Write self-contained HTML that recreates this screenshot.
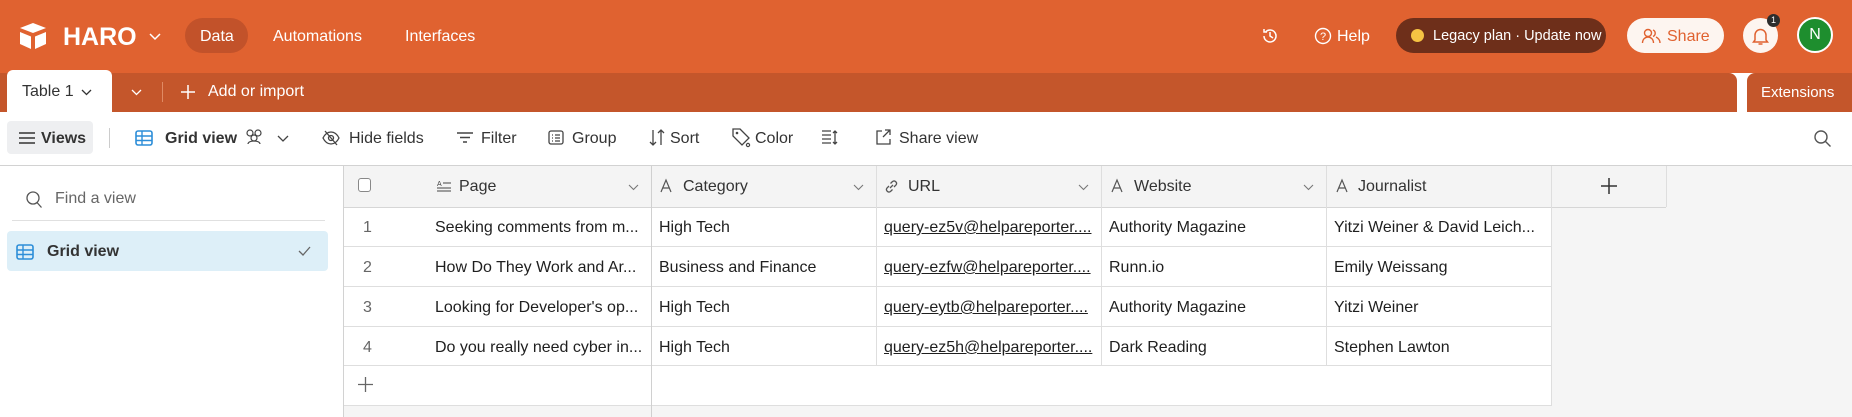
<!DOCTYPE html>
<html><head><meta charset="utf-8"><style>
*{box-sizing:border-box;margin:0;padding:0}
body{width:1852px;height:417px;overflow:hidden;background:#fff;font-family:"Liberation Sans",sans-serif;font-size:15px;color:#1f1f1f;position:relative}
.a{position:absolute;white-space:nowrap}
.w{color:#fff}
svg{position:absolute;overflow:visible}
.cell{position:absolute;height:40px;line-height:40px;font-size:16px;color:#1f1f1f;white-space:nowrap;overflow:hidden;width:215px}
.u{text-decoration:underline}
.hl{position:absolute;height:1px;background:#dedede}
.vl{position:absolute;width:1px;background:#dedede}
.tb{position:absolute;top:130px;font-size:16px;color:#333}
</style></head><body>
<!-- top bar -->
<div class="a" style="left:0;top:0;width:1852px;height:73px;background:#e06230"></div>
<svg style="left:18px;top:22px" width="30" height="28" viewBox="0 0 30 28"><path d="M15 1 L28 6 L15 11 L2 6Z" fill="#fff"/><path d="M2 10 L13 14.5 L13 27 L2 22Z" fill="#fff"/><path d="M17 14.5 L28 10 L28 22 L17 27Z" fill="#fff"/></svg>
<div class="a w" style="left:63px;top:23px;font-size:25px;font-weight:bold">HARO</div>
<svg style="left:149px;top:33px" width="12" height="8"><path d="M1 1l5 5 5-5" stroke="#fff" stroke-width="1.5" fill="none"/></svg>
<div class="a" style="left:185px;top:18px;width:63px;height:35px;border-radius:18px;background:#c2522a"></div>
<div class="a w" style="left:200px;top:28px;font-size:16px">Data</div>
<div class="a w" style="left:273px;top:28px;font-size:16px">Automations</div>
<div class="a w" style="left:405px;top:28px;font-size:16px">Interfaces</div>
<svg style="left:1261px;top:27px" width="18" height="18" viewBox="0 0 18 18"><path d="M3 9a6 6 0 1 0 2-4.5M3 2v3h3M9 5v4l3 2" stroke="#fff" stroke-width="1.5" fill="none"/></svg>
<svg style="left:1314px;top:27px" width="18" height="18"><circle cx="9" cy="9" r="7.5" stroke="#fff" stroke-width="1.4" fill="none"/><text x="9" y="13" font-size="11" fill="#fff" text-anchor="middle" font-family="Liberation Sans">?</text></svg>
<div class="a w" style="left:1337px;top:28px;font-size:16px">Help</div>
<div class="a" style="left:1396px;top:18px;width:210px;height:35px;border-radius:18px;background:#6e2f1a"></div>
<div class="a" style="left:1411px;top:29px;width:13px;height:13px;border-radius:50%;background:#f6c343"></div>
<div class="a w" style="left:1433px;top:28px;font-size:14.5px">Legacy plan · Update now</div>
<div class="a" style="left:1627px;top:18px;width:97px;height:35px;border-radius:18px;background:#fdf5f0"></div>
<svg style="left:1642px;top:28px" width="20" height="16"><circle cx="6" cy="5" r="3.5" stroke="#e06230" stroke-width="1.4" fill="none"/><path d="M0.5 15c0-4 3-6 5.5-6s5.5 2 5.5 6M11 2a3.5 3.5 0 0 1 0 6.5M14 9c2 1 4 3 4 6" stroke="#e06230" stroke-width="1.4" fill="none"/></svg>
<div class="a" style="left:1667px;top:28px;font-size:16px;color:#e06230">Share</div>
<div class="a" style="left:1743px;top:18px;width:35px;height:35px;border-radius:50%;background:#fdf5f0"></div>
<svg style="left:1752px;top:27px" width="17" height="19" viewBox="0 0 17 19"><path d="M3 13V8a5.5 5.5 0 0 1 11 0v5l1.5 2h-14zM6.5 17h4" stroke="#e06230" stroke-width="1.5" fill="none"/></svg>
<div class="a" style="left:1767px;top:14px;width:13px;height:13px;border-radius:50%;background:#2d2d2d;color:#fff;font-size:9px;line-height:13px;text-align:center">1</div>
<div class="a" style="left:1797px;top:17px;width:36px;height:36px;border-radius:50%;background:#1e8e2e;border:2px solid #fff;color:#fff;font-size:16px;line-height:32px;text-align:center">N</div>
<!-- tab bar -->
<div class="a" style="left:0;top:73px;width:1737px;height:39px;background:#c4562b;border-radius:0 8px 0 0"></div>
<div class="a" style="left:1747px;top:73px;width:105px;height:39px;background:#c4562b;border-radius:8px 0 0 0"></div>
<div class="a w" style="left:1761px;top:84px;font-size:15px">Extensions</div>
<div class="a" style="left:7px;top:70px;width:105px;height:45px;background:#fff;border-radius:6px 6px 0 0"></div>
<div class="a" style="left:22px;top:83px;font-size:16px;color:#333">Table 1</div>
<svg style="left:81px;top:89px" width="11" height="7"><path d="M1 1l4.5 4.5L10 1" stroke="#333" stroke-width="1.3" fill="none"/></svg>
<svg style="left:131px;top:89px" width="11" height="7"><path d="M1 1l4.5 4.5L10 1" stroke="#fff" stroke-width="1.3" fill="none"/></svg>
<div class="a" style="left:162px;top:82px;width:1px;height:20px;background:#e08a64"></div>
<svg style="left:180px;top:84px" width="16" height="16"><path d="M8 1v14M1 8h14" stroke="#fff" stroke-width="1.5"/></svg>
<div class="a w" style="left:208px;top:83px;font-size:16px">Add or import</div>
<!-- toolbar -->
<div class="a" style="left:7px;top:121px;width:86px;height:33px;border-radius:4px;background:#eeeff1"></div>
<svg style="left:19px;top:132px" width="16" height="12"><path d="M0 1h16M0 6h16M0 11h16" stroke="#333" stroke-width="1.5"/></svg>
<div class="a" style="left:41px;top:130px;font-size:16px;font-weight:bold;color:#333">Views</div>
<div class="a" style="left:109px;top:128px;width:1px;height:20px;background:#ccc"></div>
<svg style="left:135px;top:130px" width="18" height="16"><rect x="1" y="1" width="16" height="14" rx="2" stroke="#2d8ed8" stroke-width="1.6" fill="none"/><path d="M1 6h16M1 10.5h16M7 1v14" stroke="#2d8ed8" stroke-width="1.4"/></svg>
<div class="a" style="left:165px;top:130px;font-size:16px;font-weight:bold;color:#333">Grid view</div>
<svg style="left:244px;top:129px" width="20" height="16"><circle cx="6" cy="4" r="3" stroke="#444" stroke-width="1.2" fill="none"/><circle cx="14" cy="4" r="3" stroke="#444" stroke-width="1.2" fill="none"/><circle cx="10" cy="9" r="3" stroke="#444" stroke-width="1.2" fill="none"/><path d="M4 15c0-2 3-3 6-3s6 1 6 3" stroke="#444" stroke-width="1.2" fill="none"/></svg>
<svg style="left:277px;top:135px" width="12" height="7"><path d="M1 1l5 5 5-5" stroke="#444" stroke-width="1.3" fill="none"/></svg>
<svg style="left:322px;top:130px" width="18" height="16"><path d="M1 8c2-4 5-6 8-6s6 2 8 6c-2 4-5 6-8 6s-6-2-8-6z" stroke="#444" stroke-width="1.3" fill="none"/><circle cx="9" cy="8" r="2.5" stroke="#444" stroke-width="1.3" fill="none"/><path d="M3 1l12 14" stroke="#444" stroke-width="1.3"/></svg>
<div class="tb" style="left:349px">Hide fields</div>
<svg style="left:457px;top:132px" width="16" height="11"><path d="M0 1h16M3 5.5h10M6 10h4" stroke="#444" stroke-width="1.4"/></svg>
<div class="tb" style="left:481px">Filter</div>
<svg style="left:548px;top:130px" width="16" height="15"><rect x="1" y="1" width="14" height="13" rx="2" stroke="#444" stroke-width="1.3" fill="none"/><path d="M4 5h1M7 5h5M4 8h1M7 8h5M4 11h1M7 11h5" stroke="#444" stroke-width="1.2"/></svg>
<div class="tb" style="left:572px">Group</div>
<svg style="left:649px;top:129px" width="16" height="17"><path d="M4 1v15M1 13l3 3 3-3M12 16V1M9 4l3-3 3 3" stroke="#444" stroke-width="1.3" fill="none"/></svg>
<div class="tb" style="left:670px">Sort</div>
<svg style="left:731px;top:128px" width="20" height="20"><path d="M9 1l9 9-7 7-9-9V1z" stroke="#444" stroke-width="1.3" fill="none"/><circle cx="6" cy="5" r="1.3" fill="#444"/><circle cx="17" cy="17" r="1.6" stroke="#444" stroke-width="1.2" fill="none"/></svg>
<div class="tb" style="left:755px">Color</div>
<svg style="left:822px;top:130px" width="16" height="15"><path d="M0 1h9M0 5h9M0 9h9M0 13h9M13 1v13M11 3l2-2 2 2M11 12l2 2 2-2" stroke="#444" stroke-width="1.3" fill="none"/></svg>
<svg style="left:875px;top:129px" width="16" height="16"><path d="M7 2H2v13h13v-5M10 1h5v5M15 1l-7 7" stroke="#444" stroke-width="1.3" fill="none"/></svg>
<div class="tb" style="left:899px">Share view</div>
<svg style="left:1814px;top:130px" width="17" height="17"><circle cx="7" cy="7" r="6" stroke="#555" stroke-width="1.4" fill="none"/><path d="M11.5 11.5l5 5" stroke="#555" stroke-width="1.4"/></svg>
<div class="hl" style="left:0;top:165px;width:1852px;background:#d2d2d2"></div>
<!-- sidebar -->
<div class="vl" style="left:343px;top:166px;height:251px;background:#d2d2d2"></div>
<svg style="left:26px;top:191px" width="16" height="17"><circle cx="7" cy="7" r="6" stroke="#555" stroke-width="1.3" fill="none"/><path d="M11 11.5l4.5 5" stroke="#555" stroke-width="1.3"/></svg>
<div class="a" style="left:55px;top:190px;font-size:16px;color:#666">Find a view</div>
<div class="hl" style="left:12px;top:220px;width:313px;background:#e0e0e0"></div>
<div class="a" style="left:7px;top:231px;width:321px;height:40px;border-radius:4px;background:#ddeff8"></div>
<svg style="left:16px;top:244px" width="18" height="16"><rect x="1" y="1" width="16" height="14" rx="2" stroke="#2d8ed8" stroke-width="1.6" fill="none"/><path d="M1 6h16M1 10.5h16M7 1v14" stroke="#2d8ed8" stroke-width="1.4"/></svg>
<div class="a" style="left:47px;top:243px;font-size:16px;font-weight:bold;color:#333">Grid view</div>
<svg style="left:298px;top:246px" width="13" height="10"><path d="M1 5l4 4 7-8" stroke="#666" stroke-width="1.3" fill="none"/></svg>
<!-- grid -->
<div class="a" style="left:344px;top:166px;width:1508px;height:251px;background:#f5f5f5"></div>
<div class="a" style="left:344px;top:166px;width:1322px;height:41px;background:#f4f4f4"></div>
<div class="a" style="left:344px;top:207px;width:1207px;height:199px;background:#fff"></div>
<div class="hl" style="left:344px;top:207px;width:1322px;background:#d6d6d6"></div>
<div class="hl" style="left:344px;top:246px;width:1207px"></div>
<div class="hl" style="left:344px;top:286px;width:1207px"></div>
<div class="hl" style="left:344px;top:326px;width:1207px"></div>
<div class="hl" style="left:344px;top:365px;width:1207px"></div>
<div class="hl" style="left:344px;top:405px;width:1207px"></div>
<div class="vl" style="left:651px;top:166px;height:251px;background:#d0d0d0"></div>
<div class="vl" style="left:876px;top:166px;height:200px"></div>
<div class="vl" style="left:1101px;top:166px;height:200px"></div>
<div class="vl" style="left:1326px;top:166px;height:200px"></div>
<div class="vl" style="left:1551px;top:166px;height:240px"></div>
<div class="vl" style="left:1666px;top:166px;height:41px"></div>
<div class="a" style="left:358px;top:178px;width:13px;height:14px;border:1.3px solid #888;border-radius:3px;background:#fff"></div>
<svg style="left:437px;top:180px" width="14" height="12"><text x="0" y="6" font-size="7" fill="#444" font-family="Liberation Sans">A</text><path d="M6 3h8M0 8h14M0 11h14" stroke="#444" stroke-width="1.1"/></svg>
<div class="a" style="left:459px;top:178px;font-size:16px;color:#333">Page</div>
<svg style="left:660px;top:179px" width="12" height="14"><path d="M1 13L6 1l5 12M3 9h6" stroke="#555" stroke-width="1.2" fill="none"/></svg>
<div class="a" style="left:683px;top:178px;font-size:16px;color:#333">Category</div>
<svg style="left:884px;top:179px" width="15" height="15"><path d="M6 9l3-3M5 7l-2 2a2.5 2.5 0 0 0 3.5 3.5l2-2M10 8l2-2a2.5 2.5 0 0 0-3.5-3.5l-2 2" stroke="#555" stroke-width="1.3" fill="none"/></svg>
<div class="a" style="left:908px;top:178px;font-size:16px;color:#333">URL</div>
<svg style="left:1111px;top:179px" width="12" height="14"><path d="M1 13L6 1l5 12M3 9h6" stroke="#555" stroke-width="1.2" fill="none"/></svg>
<div class="a" style="left:1134px;top:178px;font-size:16px;color:#333">Website</div>
<svg style="left:1336px;top:179px" width="12" height="14"><path d="M1 13L6 1l5 12M3 9h6" stroke="#555" stroke-width="1.2" fill="none"/></svg>
<div class="a" style="left:1358px;top:178px;font-size:16px;color:#333">Journalist</div>
<svg style="left:628px;top:184px" width="11" height="7"><path d="M1 1l4.5 4.5L10 1" stroke="#777" stroke-width="1.1" fill="none"/></svg>
<svg style="left:853px;top:184px" width="11" height="7"><path d="M1 1l4.5 4.5L10 1" stroke="#777" stroke-width="1.1" fill="none"/></svg>
<svg style="left:1078px;top:184px" width="11" height="7"><path d="M1 1l4.5 4.5L10 1" stroke="#777" stroke-width="1.1" fill="none"/></svg>
<svg style="left:1303px;top:184px" width="11" height="7"><path d="M1 1l4.5 4.5L10 1" stroke="#777" stroke-width="1.1" fill="none"/></svg>
<svg style="left:1601px;top:178px" width="16" height="16"><path d="M8 0v16M0 8h16" stroke="#333" stroke-width="1.5"/></svg>
<!-- rows -->
<div class="cell" style="left:363px;top:208px;color:#666">1</div>
<div class="cell" style="left:435px;top:208px">Seeking comments from m...</div>
<div class="cell" style="left:659px;top:208px">High Tech</div>
<div class="cell u" style="left:884px;top:208px">query-ez5v@helpareporter....</div>
<div class="cell" style="left:1109px;top:208px">Authority Magazine</div>
<div class="cell" style="left:1334px;top:208px">Yitzi Weiner &amp; David Leich...</div>
<div class="cell" style="left:363px;top:248px;color:#666">2</div>
<div class="cell" style="left:435px;top:248px">How Do They Work and Ar...</div>
<div class="cell" style="left:659px;top:248px">Business and Finance</div>
<div class="cell u" style="left:884px;top:248px">query-ezfw@helpareporter....</div>
<div class="cell" style="left:1109px;top:248px">Runn.io</div>
<div class="cell" style="left:1334px;top:248px">Emily Weissang</div>
<div class="cell" style="left:363px;top:288px;color:#666">3</div>
<div class="cell" style="left:435px;top:288px">Looking for Developer's op...</div>
<div class="cell" style="left:659px;top:288px">High Tech</div>
<div class="cell u" style="left:884px;top:288px">query-eytb@helpareporter....</div>
<div class="cell" style="left:1109px;top:288px">Authority Magazine</div>
<div class="cell" style="left:1334px;top:288px">Yitzi Weiner</div>
<div class="cell" style="left:363px;top:328px;color:#666">4</div>
<div class="cell" style="left:435px;top:328px">Do you really need cyber in...</div>
<div class="cell" style="left:659px;top:328px">High Tech</div>
<div class="cell u" style="left:884px;top:328px">query-ez5h@helpareporter....</div>
<div class="cell" style="left:1109px;top:328px">Dark Reading</div>
<div class="cell" style="left:1334px;top:328px">Stephen Lawton</div>
<svg style="left:358px;top:377px" width="15" height="15"><path d="M7.5 0v15M0 7.5h15" stroke="#666" stroke-width="1.3"/></svg>
</body></html>
